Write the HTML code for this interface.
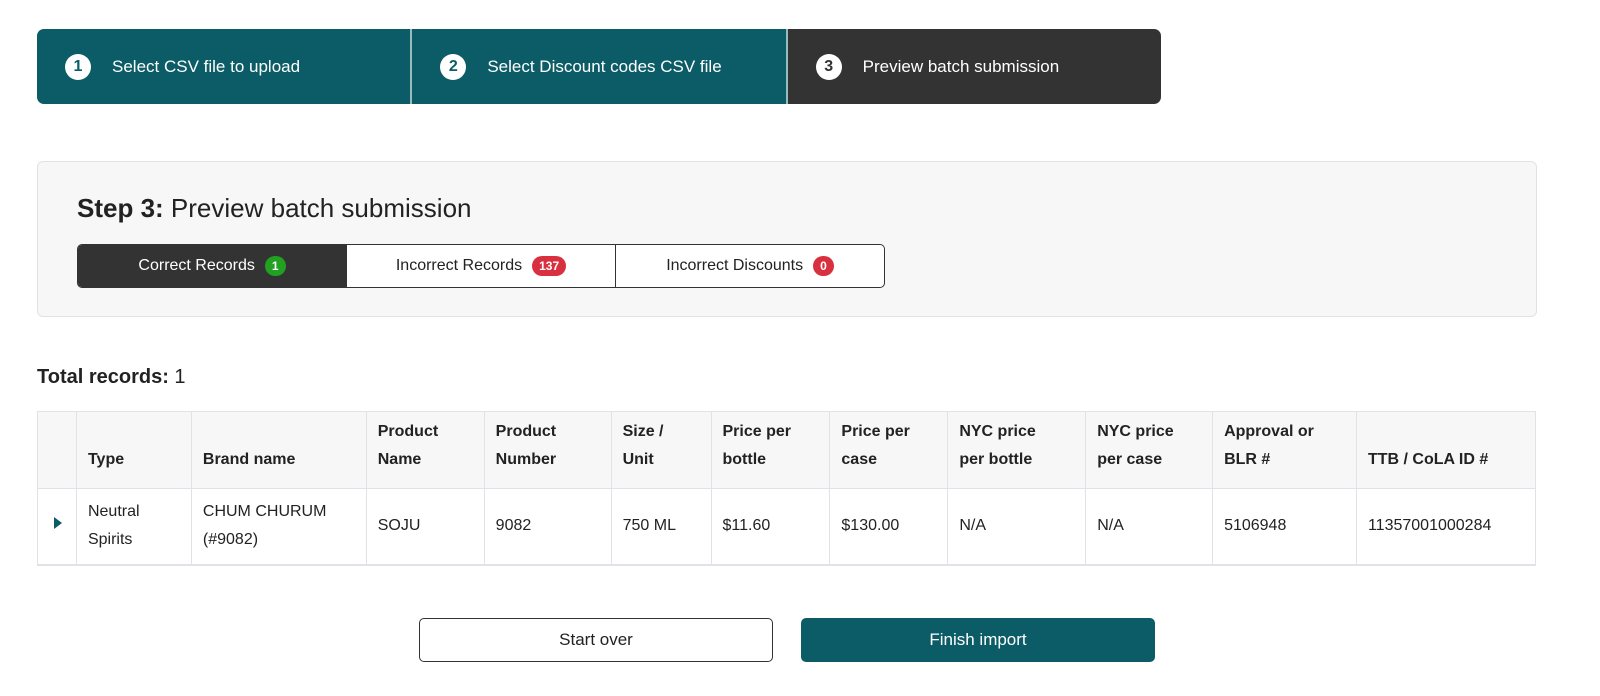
<!DOCTYPE html>
<html><head><meta charset="utf-8"><style>
*{box-sizing:border-box;margin:0;padding:0}
body{width:1600px;height:696px;background:#fff;font-family:"Liberation Sans",sans-serif;color:#222;position:relative;overflow:hidden}
.steps{position:absolute;left:37px;top:29px;width:1124px;height:75px;display:flex;border-radius:7px;overflow:hidden}
.st{flex:1;display:flex;align-items:center;color:#fff;font-size:17px;padding-left:28px;background:#0b5c66}
.st+.st{border-left:2px solid #9bb}
.st.dark{background:#333}
.num{width:26px;height:26px;border-radius:50%;background:#fff;color:#0b5c66;font-weight:bold;font-size:16px;display:flex;align-items:center;justify-content:center;margin-right:21px}
.dark .num{color:#333}
.panel{position:absolute;left:37px;top:161px;width:1500px;height:156px;background:#f7f7f7;border:1px solid #e2e2e2;border-radius:6px}
.panel h2{position:absolute;left:39px;top:31px;font-size:26px;font-weight:normal;color:#222}
.tabs{position:absolute;left:39px;top:82px;width:808px;height:44px;display:flex;border:1px solid #333;border-radius:5px;overflow:hidden;background:#fff}
.tab{flex:1;display:flex;align-items:center;justify-content:center;font-size:16px;color:#222}
.tab+.tab{border-left:1px solid #333}
.tab.on{background:#333;color:#fff}
.b{display:inline-block;border-radius:11px;color:#fff;font-size:12px;font-weight:bold;padding:3px 7px;margin-left:10px}
.g{background:#22a022}.r{background:#d93040}
.total{position:absolute;left:37px;top:366px;font-size:20px}
table{position:absolute;left:37px;top:411px;width:1499px;border-collapse:collapse;font-size:16px}
td,th{border:1px solid #dfe3e8;padding:0 11px;text-align:left;vertical-align:middle}
th{background:#f7f7f7;height:77px;font-weight:bold;vertical-align:bottom;padding-bottom:14px;line-height:28px}
td{height:76px;line-height:28px}
tr:last-child td{border-bottom:2px solid #dfe3e8}
.btn{position:absolute;top:618px;width:354px;height:44px;border-radius:5px;display:flex;align-items:center;justify-content:center;font-size:17px}
</style></head><body>
<div class="steps">
<div class="st"><span class="num">1</span>Select CSV file to upload</div>
<div class="st"><span class="num">2</span>Select Discount codes CSV file</div>
<div class="st dark"><span class="num">3</span>Preview batch submission</div>
</div>
<div class="panel">
<h2><b>Step 3:</b> Preview batch submission</h2>
<div class="tabs">
<div class="tab on">Correct Records<span class="b g">1</span></div>
<div class="tab">Incorrect Records<span class="b r">137</span></div>
<div class="tab">Incorrect Discounts<span class="b r">0</span></div>
</div>
</div>
<div class="total"><b>Total records:</b> 1</div>
<table>
<colgroup><col style="width:39px"><col style="width:115px"><col style="width:175px"><col style="width:118px"><col style="width:127px"><col style="width:100px"><col style="width:119px"><col style="width:118px"><col style="width:138px"><col style="width:127px"><col style="width:144px"><col style="width:179px"></colgroup>
<tr><th></th><th>Type</th><th>Brand name</th><th>Product<br>Name</th><th>Product<br>Number</th><th>Size /<br>Unit</th><th>Price per<br>bottle</th><th>Price per<br>case</th><th>NYC price<br>per bottle</th><th>NYC price<br>per case</th><th>Approval or<br>BLR #</th><th>TTB / CoLA ID #</th></tr>
<tr><td style="padding:0 0 0 15px"><svg width="10" height="14"><path d="M1 1L9 7L1 13Z" fill="#0b5c66"/></svg></td><td>Neutral<br>Spirits</td><td>CHUM CHURUM<br>(#9082)</td><td>SOJU</td><td>9082</td><td>750 ML</td><td>$11.60</td><td>$130.00</td><td>N/A</td><td>N/A</td><td>5106948</td><td>11357001000284</td></tr>
</table>
<div class="btn" style="left:419px;border:1px solid #333;color:#222">Start over</div>
<div class="btn" style="left:801px;background:#0b5c66;color:#fff">Finish import</div>
</body></html>
